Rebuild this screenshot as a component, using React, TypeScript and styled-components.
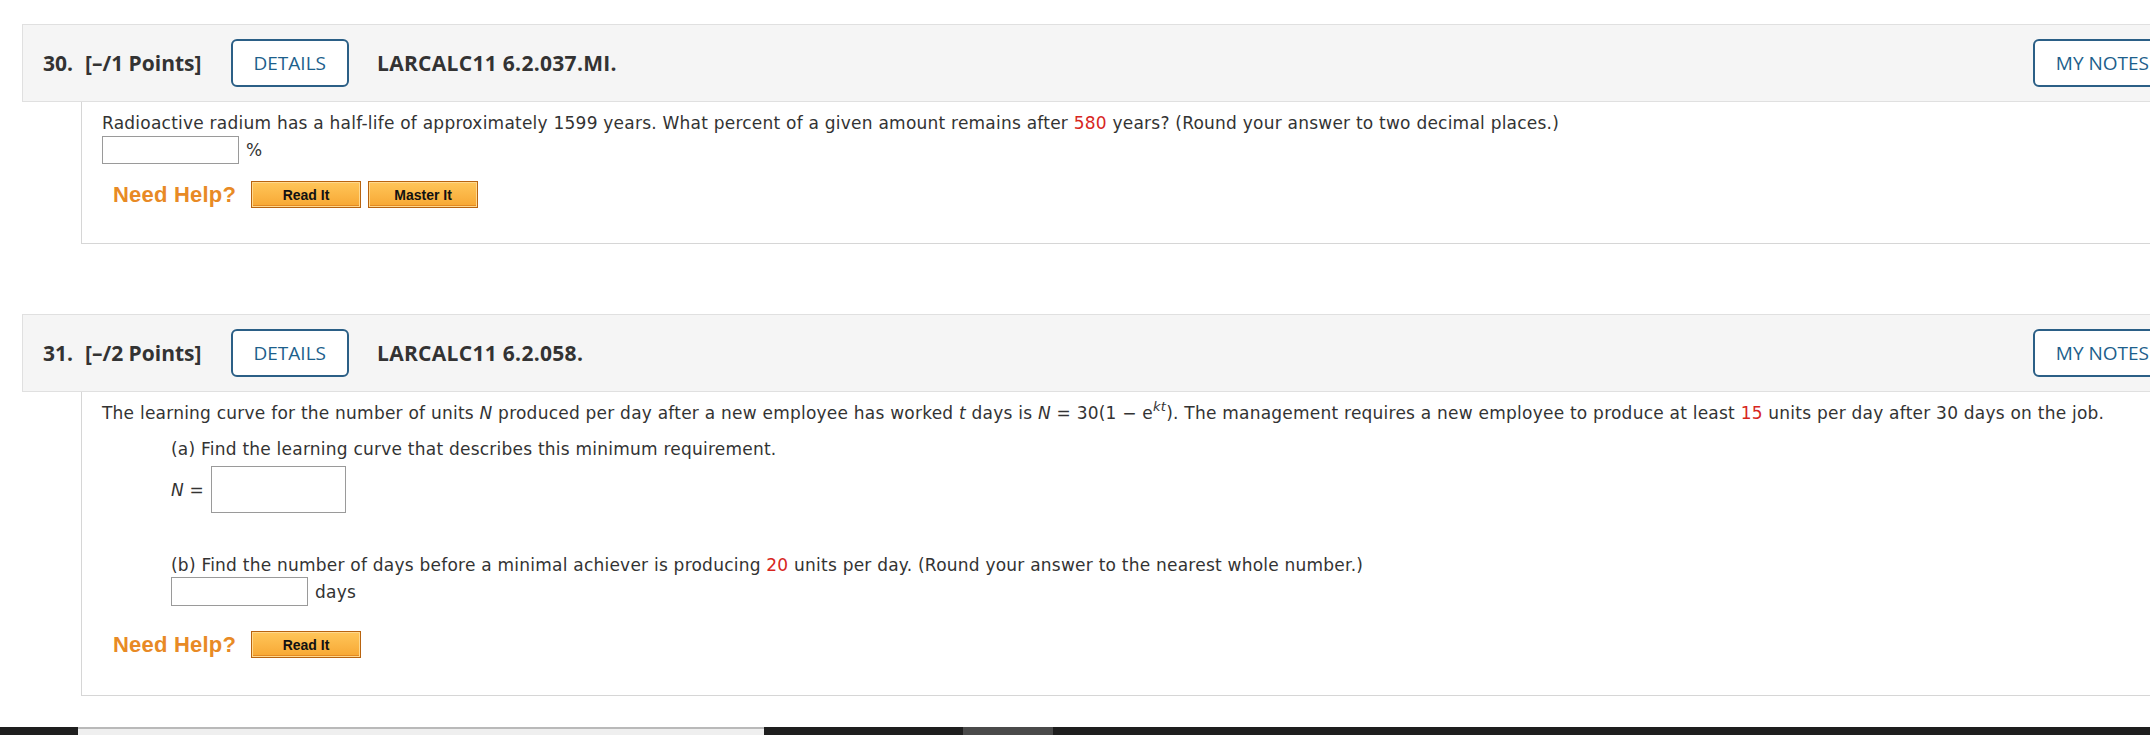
import styled, { createGlobalStyle } from "styled-components";

const GlobalStyle = createGlobalStyle`
  html, body {
    margin: 0;
    padding: 0;
    background: #fff;
    overflow: hidden;
  }
`;

const Page = styled.div`
  width: 2150px;
  height: 735px;
  display: flex;
  flex-direction: column;
  overflow: hidden;
`;

const Content = styled.div`
  flex: 1;
  padding: 24px 0 0 22px;
  display: flex;
  flex-direction: column;
  gap: 70px;
`;

const Question = styled.section`
  width: 2180px;
`;

const QuestionHeader = styled.div`
  box-sizing: border-box;
  height: 78px;
  display: flex;
  align-items: center;
  padding: 0 30px 0 20px;
  background: #f5f5f5;
  border: 1px solid #e0e0e0;
  border-right: none;
  font-family: "Open Sans", sans-serif;
  color: #333;
`;

const Number = styled.span`
  font-size: 21px;
  font-weight: 700;
`;

const Points = styled.span`
  margin-left: 12px;
  font-size: 21px;
  font-weight: 700;
`;

const OutlineButton = styled.button<{ $push?: boolean }>`
  box-sizing: border-box;
  height: 48px;
  margin-left: ${(p) => (p.$push ? "auto" : "29px")};
  padding: 0 21px;
  border: 2px solid #2b5f86;
  border-radius: 6px;
  background: #fff;
  color: #1d5f8c;
  font-family: "Open Sans", sans-serif;
  font-size: 19px;
  white-space: nowrap;
`;

const Title = styled.span`
  margin-left: 28px;
  font-size: 21px;
  font-weight: 700;
  letter-spacing: 0.3px;
`;

const QuestionBody = styled.div<{ $bottom: number }>`
  margin-left: 59px;
  padding: 11px 0 ${(p) => p.$bottom}px 20px;
  border-left: 1px solid #d6d6d6;
  border-bottom: 1px solid #d6d6d6;
  font-family: "DejaVu Sans", Verdana, sans-serif;
  font-size: 17px;
  letter-spacing: 0.23px;
  line-height: 20px;
  color: #333;
`;

const Line = styled.div<{ $indent?: number; $top?: number }>`
  margin-left: ${(p) => p.$indent ?? 0}px;
  margin-top: ${(p) => p.$top ?? 0}px;
  white-space: nowrap;
`;

const Red = styled.span`
  color: #d7261e;
`;

const Var = styled.i`
  font-style: italic;
`;

const Sup = styled.sup`
  font-size: 13px;
  font-style: italic;
  line-height: 0;
  vertical-align: 8px;
`;

const AnswerRow = styled.div<{ $indent?: number; $top: number }>`
  display: flex;
  align-items: center;
  gap: 7px;
  margin-left: ${(p) => p.$indent ?? 0}px;
  margin-top: ${(p) => p.$top}px;
`;

const AnswerInput = styled.input<{ $w: number; $h: number }>`
  box-sizing: border-box;
  width: ${(p) => p.$w}px;
  height: ${(p) => p.$h}px;
  margin: 0;
  border: 1px solid #9a9a9a;
  background: #fff;
`;

const HelpRow = styled.div<{ $top: number }>`
  display: flex;
  align-items: center;
  gap: 7px;
  margin: ${(p) => p.$top}px 0 0 11px;
`;

const NeedHelp = styled.span`
  margin-right: 8px;
  font-family: "Liberation Sans", Arial, sans-serif;
  font-size: 22px;
  font-weight: 700;
  letter-spacing: 0.2px;
  color: #e88a25;
`;

const HelpButton = styled.button`
  box-sizing: border-box;
  width: 110px;
  height: 27px;
  padding: 0;
  border: 1px solid #b8630f;
  background: linear-gradient(#ffc65a, #f7a733);
  box-shadow: inset 0 0 0 1px #ffd98f, inset 0 -2px 0 #e38a22;
  font-family: "Liberation Sans", Arial, sans-serif;
  font-size: 14px;
  font-weight: 700;
  color: #111;
`;

const Taskbar = styled.div`
  height: 8px;
  display: flex;
  background: #1e1e1e;
  padding-left: 78px;
`;

const TaskSlot = styled.div<{ $w: number; $gap: number; $light?: boolean }>`
  width: ${(p) => p.$w}px;
  margin-left: ${(p) => p.$gap}px;
  background: ${(p) => (p.$light ? "#efefef" : "#4a4a4a")};
  border-top: ${(p) => (p.$light ? "2px solid #b9b9b9" : "none")};
`;

export default function App() {
  return (
    <Page>
      <GlobalStyle />
      <Content>
        <Question>
          <QuestionHeader>
            <Number>30.</Number>
            <Points>[–/1 Points]</Points>
            <OutlineButton>DETAILS</OutlineButton>
            <Title>LARCALC11 6.2.037.MI.</Title>
            <OutlineButton $push>MY NOTES</OutlineButton>
          </QuestionHeader>
          <QuestionBody $bottom={35}>
            <Line>
              Radioactive radium has a half-life of approximately 1599 years. What percent of a given
              amount remains after <Red>580</Red> years? (Round your answer to two decimal places.)
            </Line>
            <AnswerRow $top={3}>
              <AnswerInput $w={137} $h={28} />
              <span>%</span>
            </AnswerRow>
            <HelpRow $top={17}>
              <NeedHelp>Need Help?</NeedHelp>
              <HelpButton>Read It</HelpButton>
              <HelpButton>Master It</HelpButton>
            </HelpRow>
          </QuestionBody>
        </Question>

        <Question>
          <QuestionHeader>
            <Number>31.</Number>
            <Points>[–/2 Points]</Points>
            <OutlineButton>DETAILS</OutlineButton>
            <Title>LARCALC11 6.2.058.</Title>
            <OutlineButton $push>MY NOTES</OutlineButton>
          </QuestionHeader>
          <QuestionBody $bottom={37}>
            <Line>
              The learning curve for the number of units <Var>N</Var> produced per day after a new
              employee has worked <Var>t</Var> days is <Var>N</Var> = 30(1 − e<Sup>kt</Sup>). The
              management requires a new employee to produce at least <Red>15</Red> units per day after
              30 days on the job.
            </Line>
            <Line $indent={69} $top={16}>
              (a) Find the learning curve that describes this minimum requirement.
            </Line>
            <AnswerRow $indent={69} $top={7}>
              <span>
                <Var>N</Var> =
              </span>
              <AnswerInput $w={135} $h={47} />
            </AnswerRow>
            <Line $indent={69} $top={42}>
              (b) Find the number of days before a minimal achiever is producing <Red>20</Red> units
              per day. (Round your answer to the nearest whole number.)
            </Line>
            <AnswerRow $indent={69} $top={2}>
              <AnswerInput $w={137} $h={29} />
              <span>days</span>
            </AnswerRow>
            <HelpRow $top={25}>
              <NeedHelp>Need Help?</NeedHelp>
              <HelpButton>Read It</HelpButton>
            </HelpRow>
          </QuestionBody>
        </Question>
      </Content>
      <Taskbar>
        <TaskSlot $light $w={686} $gap={0} />
        <TaskSlot $w={90} $gap={199} />
      </Taskbar>
    </Page>
  );
}
